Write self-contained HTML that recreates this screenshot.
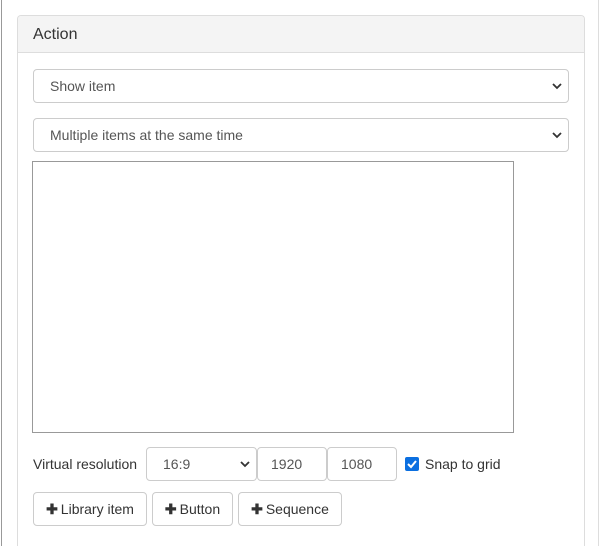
<!DOCTYPE html>
<html><head><style>
html,body{margin:0;width:602px;height:546px;overflow:hidden}
body{background:#fff;font-family:"Liberation Sans",Arial,sans-serif;position:relative;color:#333}
.a{position:absolute;box-sizing:border-box}
.sel{border:1px solid #ccc;border-radius:4px;background:#fff;font-size:14px;color:#555;padding-left:16px;display:flex;align-items:center}
.chev{position:absolute;right:6px;top:50%;margin-top:-4px}
.btn{border:1px solid #ccc;border-radius:4px;background:#fff;font-size:14px;color:#333;display:flex;align-items:center;justify-content:center}
</style></head><body>
<div class="a" style="left:1px;top:0;width:1px;height:546px;background:#999"></div>
<div class="a" style="left:598px;top:0;width:1px;height:546px;background:#ddd"></div>
<div class="a" style="left:17px;top:15px;width:568px;height:531px;border:1px solid #ddd;border-bottom:none;border-radius:4px 4px 0 0"></div>
<div class="a" style="left:18px;top:16px;width:566px;height:37px;background:#f4f4f4;border-bottom:1px solid #ddd;border-radius:3px 3px 0 0;font-size:16px;padding:10px 0 0 15px">Action</div>
<div class="a sel" style="left:33px;top:69px;width:536px;height:34px">Show item<svg class="chev" width="10" height="8" viewBox="0 0 10 8"><path d="M1 2l4 4 4-4" fill="none" stroke="#333" stroke-width="1.8"/></svg></div>
<div class="a sel" style="left:33px;top:118px;width:536px;height:34px">Multiple items at the same time<svg class="chev" width="10" height="8" viewBox="0 0 10 8"><path d="M1 2l4 4 4-4" fill="none" stroke="#333" stroke-width="1.8"/></svg></div>
<div class="a" style="left:32px;top:161px;width:482px;height:272px;border:1px solid #999"></div>
<div class="a" style="left:33px;top:456px;font-size:14px">Virtual resolution</div>
<div class="a sel" style="left:146px;top:447px;width:111px;height:34px">16:9<svg class="chev" width="10" height="8" viewBox="0 0 10 8"><path d="M1 2l4 4 4-4" fill="none" stroke="#333" stroke-width="1.8"/></svg></div>
<div class="a sel" style="left:257px;top:447px;width:70px;height:34px;padding-left:13px">1920</div>
<div class="a sel" style="left:327px;top:447px;width:70px;height:34px;padding-left:13px">1080</div>
<div class="a" style="left:405px;top:457px;width:14px;height:14px;background:#0b6fe0;border-radius:2px"><svg width="14" height="14" viewBox="0 0 14 14"><path d="M3 7l3 3 5-6" fill="none" stroke="#fff" stroke-width="2"/></svg></div>
<div class="a" style="left:425px;top:456px;font-size:14px">Snap to grid</div>
<div class="a btn" style="left:33px;top:492px;width:114px;height:34px"><b style="margin-right:3px">✚</b>Library item</div>
<div class="a btn" style="left:152px;top:492px;width:81px;height:34px"><b style="margin-right:3px">✚</b>Button</div>
<div class="a btn" style="left:238px;top:492px;width:104px;height:34px"><b style="margin-right:3px">✚</b>Sequence</div>
</body></html>
